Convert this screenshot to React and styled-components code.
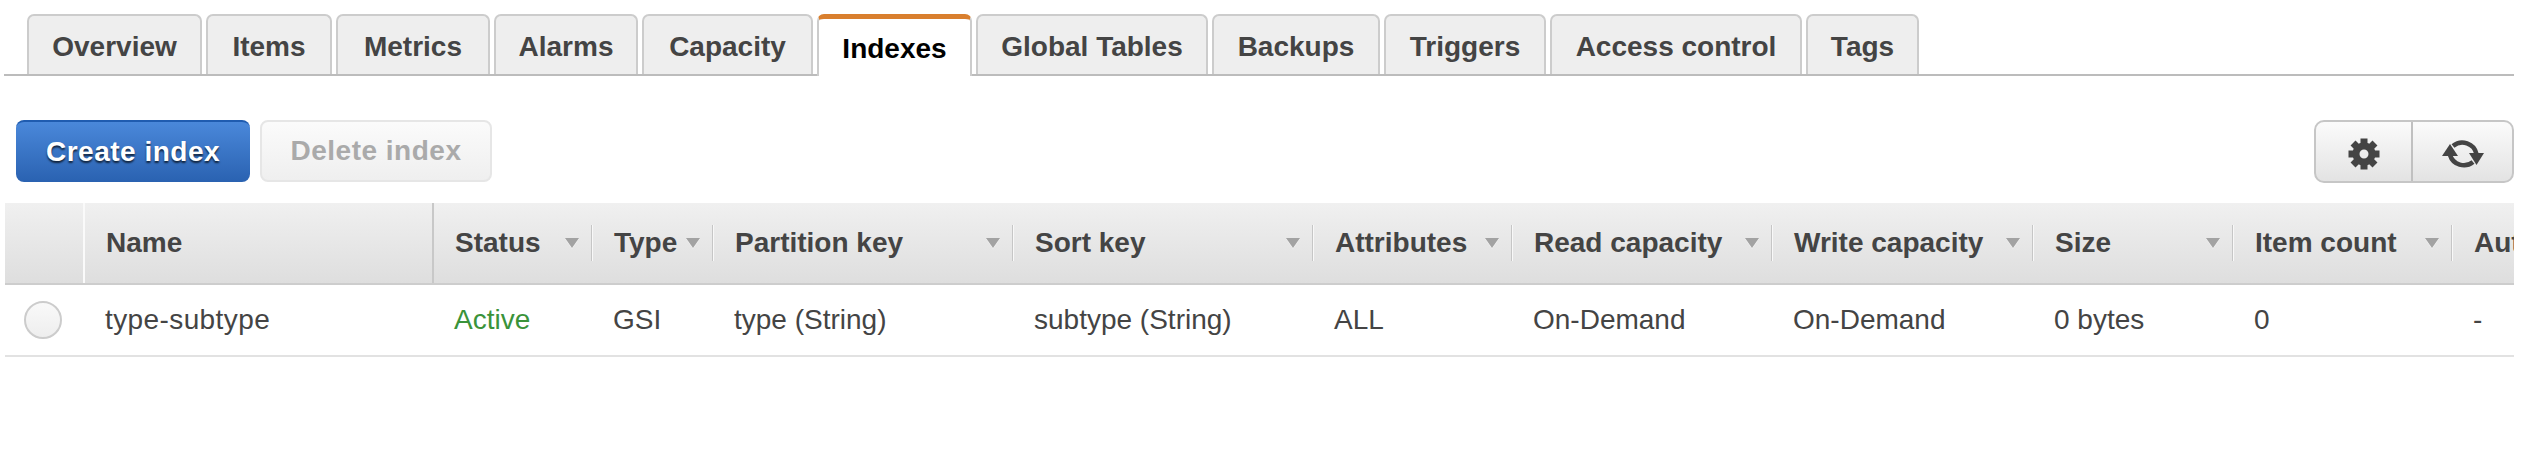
import React from 'react';
import styled, { createGlobalStyle } from 'styled-components';

const GlobalStyle = createGlobalStyle`
  body {
    margin: 0;
    background: #ffffff;
    font-family: "Liberation Sans", Arial, sans-serif;
    color: #444444;
    overflow: hidden;
  }
`;

const Page = styled.div`
  width: 2532px;
  height: 462px;
  padding-top: 14px;
  box-sizing: border-box;
`;

const TabBar = styled.div`
  display: flex;
  gap: 4px;
  width: 2487px;
  height: 60px;
  margin-left: 4px;
  padding-left: 23px;
  border-bottom: 2px solid #bcbcbc;
`;

const Tab = styled.div`
  flex: none;
  width: ${(props) => props.$width}px;
  height: ${(props) => (props.$active ? '62px' : '60px')};
  padding-top: ${(props) => (props.$active ? '3px' : '4px')};
  box-sizing: border-box;
  display: flex;
  align-items: center;
  justify-content: center;
  font-size: 28px;
  font-weight: 700;
  border-style: solid;
  border-color: #cccccc;
  border-width: ${(props) => (props.$active ? '5px 2px 0' : '2px 2px 0')};
  border-top-color: ${(props) => (props.$active ? '#d97f2e' : '#cccccc')};
  border-radius: 7px 7px 0 0;
  background: ${(props) => (props.$active ? '#ffffff' : '#eeeeee')};
  color: ${(props) => (props.$active ? '#000000' : '#444444')};
`;

const Toolbar = styled.div`
  display: flex;
  justify-content: space-between;
  width: 2514px;
  margin-top: 44px;
  padding-left: 16px;
  box-sizing: border-box;
`;

const ButtonRow = styled.div`
  display: flex;
  gap: 10px;
`;

const PrimaryButton = styled.div`
  width: 234px;
  height: 62px;
  box-sizing: border-box;
  display: flex;
  align-items: center;
  justify-content: center;
  border-radius: 8px;
  border-top: 2px solid #1f5cb0;
  background: linear-gradient(#4a88da, #2a62b1);
  color: #ffffff;
  font-size: 28px;
  font-weight: 700;
  letter-spacing: 0.5px;
  text-shadow: 0 2px 2px rgba(0, 0, 0, 0.7);
`;

const DisabledButton = styled.div`
  width: 232px;
  height: 62px;
  box-sizing: border-box;
  display: flex;
  align-items: center;
  justify-content: center;
  border-radius: 8px;
  border: 2px solid #e6e6e6;
  background: linear-gradient(#fbfbfb, #efefef);
  color: #aaaaaa;
  font-size: 28px;
  font-weight: 700;
  letter-spacing: 0.5px;
`;

const IconGroup = styled.div`
  display: flex;
  width: 200px;
  height: 63px;
  box-sizing: border-box;
  border: 2px solid #c6c6c6;
  border-radius: 10px;
  background: linear-gradient(#fbfbfb, #e3e3e3);
`;

const IconButton = styled.div`
  display: flex;
  align-items: center;
  justify-content: center;
  width: ${(props) => props.$width}px;
  padding-top: 5px;
  box-sizing: border-box;
  & + & {
    border-left: 2px solid #c0c0c0;
  }
`;

const Table = styled.div`
  width: 2509px;
  margin-top: 20px;
  margin-left: 5px;
  overflow: hidden;
`;

const columns = '80px 349px 159px 121px 300px 300px 199px 260px 261px 200px 219px 200px';

const HeaderRow = styled.div`
  display: grid;
  grid-template-columns: ${columns};
  height: 82px;
  box-sizing: border-box;
  border-bottom: 2px solid #cdcdcd;
  background: linear-gradient(#f0f0f0, #dedede);
`;

const HeaderCell = styled.div`
  position: relative;
  display: flex;
  align-items: center;
  justify-content: space-between;
  padding: 0 14px 0 21px;
  font-size: 28px;
  font-weight: 700;
  white-space: nowrap;
  color: #444444;
  &::after {
    content: '';
    position: absolute;
    right: 0;
    top: ${(props) => (props.$tall ? '0' : '22px')};
    bottom: ${(props) => (props.$tall ? '0' : '22px')};
    width: 2px;
    background: ${(props) =>
      props.$tall === 'white'
        ? '#fafafa'
        : props.$tall
          ? '#c8c8c8'
          : 'linear-gradient(90deg, #c6c6c6 50%, #f8f8f8 50%)'};
  }
`;

const SortArrow = styled.span`
  flex: none;
  width: 0;
  height: 0;
  border-left: 7px solid transparent;
  border-right: 7px solid transparent;
  border-top: 10px solid #a2a2a2;
  filter: drop-shadow(0 1px 0 #f4f4f4);
`;

const BodyRow = styled.div`
  display: grid;
  grid-template-columns: ${columns};
  height: 72px;
  box-sizing: border-box;
  border-bottom: 2px solid #e2e2e2;
`;

const BodyCell = styled.div`
  display: flex;
  align-items: center;
  padding-left: 20px;
  font-size: 28px;
  white-space: nowrap;
  color: ${(props) => props.$color || '#444444'};
`;

const NameText = styled.span`
  letter-spacing: 0.4px;
`;

const Radio = styled.span`
  width: 38px;
  height: 38px;
  margin-left: -1px;
  box-sizing: border-box;
  border: 2px solid #cccccc;
  border-radius: 50%;
  background: linear-gradient(#f9f9f9, #eeeeee);
`;

const tabs = [
  { label: 'Overview', width: 175 },
  { label: 'Items', width: 126 },
  { label: 'Metrics', width: 154 },
  { label: 'Alarms', width: 144 },
  { label: 'Capacity', width: 171 },
  { label: 'Indexes', width: 155, active: true },
  { label: 'Global Tables', width: 232 },
  { label: 'Backups', width: 168 },
  { label: 'Triggers', width: 162 },
  { label: 'Access control', width: 252 },
  { label: 'Tags', width: 113 },
];

const headers = ['Status', 'Type', 'Partition key', 'Sort key', 'Attributes', 'Read capacity', 'Write capacity', 'Size', 'Item count'];

const cells = ['type (String)', 'subtype (String)', 'ALL', 'On-Demand', 'On-Demand', '0 bytes', '0', '-'];

const teeth = [0, 45, 90, 135, 180, 225, 270, 315];

function GearIcon() {
  return (
    <svg width="32" height="32" viewBox="0 0 32 32" fill="none">
      <circle cx="16" cy="16" r="8" stroke="#444" strokeWidth="7" />
      {teeth.map((angle) => (
        <rect key={angle} x="12.5" y="0.5" width="7" height="7" fill="#444" transform={`rotate(${angle} 16 16)`} />
      ))}
    </svg>
  );
}

function RefreshIcon() {
  return (
    <svg width="42" height="36" viewBox="0 0 42 36" fill="none">
      <path d="M11 10 A14.5 14.5 0 0 1 34.5 18" stroke="#444" strokeWidth="4.5" />
      <path d="M31 26 A14.5 14.5 0 0 1 8 19" stroke="#444" strokeWidth="4.5" />
      <path d="M0 20 L8 8 L16 20 Z" fill="#444" />
      <path d="M27 17 L42 17 L34.5 29 Z" fill="#444" />
    </svg>
  );
}

function App() {
  return (
    <Page>
      <GlobalStyle />
      <TabBar>
        {tabs.map((tab) => (
          <Tab key={tab.label} $width={tab.width} $active={tab.active}>{tab.label}</Tab>
        ))}
      </TabBar>

      <Toolbar>
        <ButtonRow>
          <PrimaryButton>Create index</PrimaryButton>
          <DisabledButton>Delete index</DisabledButton>
        </ButtonRow>
        <IconGroup>
          <IconButton $width={95}><GearIcon /></IconButton>
          <IconButton $width={101}><RefreshIcon /></IconButton>
        </IconGroup>
      </Toolbar>

      <Table>
        <HeaderRow>
          <HeaderCell $tall="white" />
          <HeaderCell $tall="grey">Name</HeaderCell>
          {headers.map((header) => (
            <HeaderCell key={header}>
              {header}
              <SortArrow />
            </HeaderCell>
          ))}
          <HeaderCell>Auto Scaling</HeaderCell>
        </HeaderRow>
        <BodyRow>
          <BodyCell><Radio /></BodyCell>
          <BodyCell><NameText>type-subtype</NameText></BodyCell>
          <BodyCell $color="#3a933a">Active</BodyCell>
          <BodyCell>GSI</BodyCell>
          {cells.map((cell, i) => (
            <BodyCell key={i}>{cell}</BodyCell>
          ))}
        </BodyRow>
      </Table>
    </Page>
  );
}

export default App;
